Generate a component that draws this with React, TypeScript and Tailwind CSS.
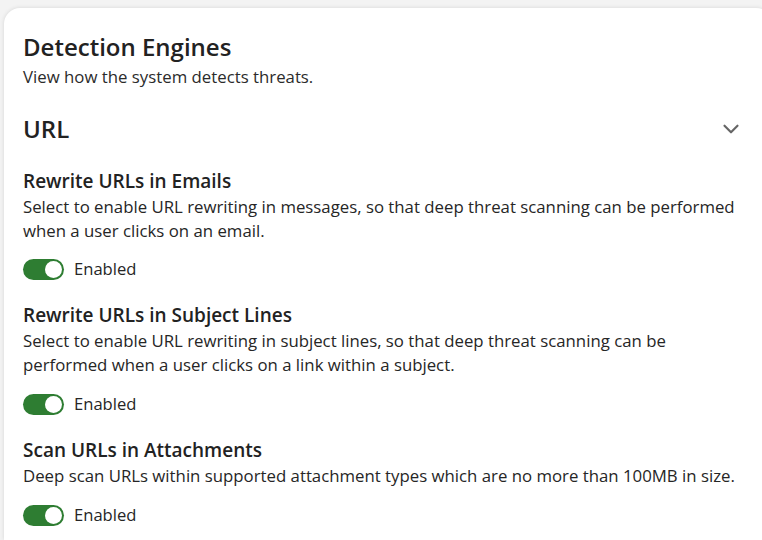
import { ChevronDown } from 'lucide-react'

interface Setting {
  id: string
  title: string
  description: string
  enabled: boolean
}

const SETTINGS: Setting[] = [
  {
    id: 'rewrite-emails',
    title: 'Rewrite URLs in Emails',
    description:
      'Select to enable URL rewriting in messages, so that deep threat scanning can be performed when a user clicks on an email.',
    enabled: true,
  },
  {
    id: 'rewrite-subjects',
    title: 'Rewrite URLs in Subject Lines',
    description:
      'Select to enable URL rewriting in subject lines, so that deep threat scanning can be performed when a user clicks on a link within a subject.',
    enabled: true,
  },
  {
    id: 'scan-attachments',
    title: 'Scan URLs in Attachments',
    description:
      'Deep scan URLs within supported attachment types which are no more than 100MB in size.',
    enabled: true,
  },
]

function Toggle({ on }: { on: boolean }) {
  return (
    <div className="flex items-center gap-[10px] h-6">
      <span
        className={`relative inline-flex w-[41px] h-[21px] rounded-full ${on ? 'bg-[#2e7d32]' : 'bg-[#9e9e9e]'}`}
      >
        <span
          className={`absolute top-[2px] w-[17px] h-[17px] rounded-full bg-white ${on ? 'right-[2px]' : 'left-[2px]'}`}
        />
      </span>
      <span className="text-[16.6px] text-[#262626]">{on ? 'Enabled' : 'Disabled'}</span>
    </div>
  )
}

export default function App() {
  return (
    <div
      className="min-h-[540px] bg-[#f3f3f3] pl-1 pt-2 overflow-hidden"
      style={{ fontFamily: '"Open Sans", "Noto Sans", sans-serif' }}
    >
      <div className="w-[768px] min-h-[532px] bg-white rounded-t-2xl shadow-[0_0_4px_rgba(0,0,0,0.12)] pl-[19px] pt-6 text-[#222]">
        <div className="w-[721px]">
          <h2 className="text-[24px] leading-[30px] font-semibold">Detection Engines</h2>
          <p className="mt-1 text-[16.8px] leading-[22px] text-[#2b2b2b]">View how the system detects threats.</p>

          <div className="mt-[26px] flex items-center justify-between">
            <h3 className="text-[24px] leading-[30px] font-semibold">URL</h3>
            <ChevronDown className="w-[26px] h-[26px] text-[#666]" strokeWidth={2} />
          </div>

          {SETTINGS.map((s, i) => (
            <div key={s.id} className={i === 0 ? 'mt-[25px]' : 'mt-[22px]'}>
              <h4 className="text-[19px] leading-6 font-semibold">{s.title}</h4>
              <p className="mt-[2px] text-[16.8px] leading-6 text-[#262626]">{s.description}</p>
              <div className={i === 0 ? 'mt-[14px]' : 'mt-[15px]'}>
                <Toggle on={s.enabled} />
              </div>
            </div>
          ))}
        </div>
      </div>
    </div>
  )
}
